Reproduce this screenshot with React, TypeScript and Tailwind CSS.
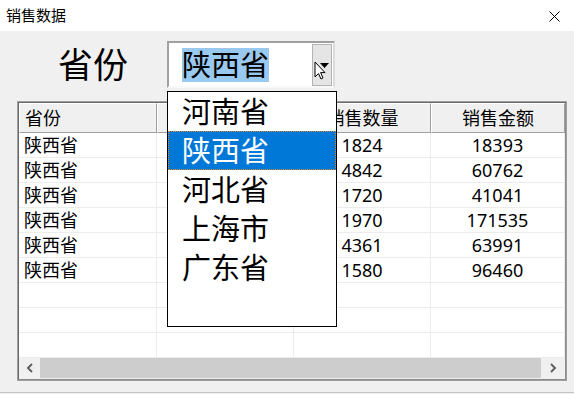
const rows = [
  { province: "陕西省", qty: "1824", amount: "18393" },
  { province: "陕西省", qty: "4842", amount: "60762" },
  { province: "陕西省", qty: "1720", amount: "41041" },
  { province: "陕西省", qty: "1970", amount: "171535" },
  { province: "陕西省", qty: "4361", amount: "63991" },
  { province: "陕西省", qty: "1580", amount: "96460" },
  null,
  null,
  null,
];

const options = ["河南省", "陕西省", "河北省", "上海市", "广东省"];

export default function App() {
  return (
    <div className="w-[574px] h-[394px] bg-[#f0f0f0] flex flex-col text-black font-['Noto_Sans','Noto_Sans_CJK_SC',sans-serif] overflow-hidden">
      {/* Title bar */}
      <div className="h-[31px] shrink-0 bg-white flex items-center justify-between pl-[6px] pr-[14px]">
        <span className="text-[15px] leading-none">销售数据</span>
        <svg width="11" height="11" viewBox="0 0 11 11" className="mt-[1px]">
          <path d="M0.5 0.5 L10.5 10.5 M10.5 0.5 L0.5 10.5" stroke="#000" strokeWidth="1" />
        </svg>
      </div>

      {/* Body */}
      <div className="flex-1 relative flex flex-col border-b border-[#c4c4c4] mb-px">
        {/* Filter row */}
        <div className="flex items-center h-[47px] mt-[10px] pl-[58px]">
          <span className="w-[109px] text-[35px] leading-none">省份</span>
          <div className="w-[168px] h-[47px] border-2 border-t-[#a0a0a0] border-l-[#a0a0a0] border-r-[#dcdcdc] border-b-[#f8f8f8] bg-white flex items-center pl-[13px] pr-[1px]">
            <span className="bg-[#99c9ef] text-[29px] leading-[34px] h-[34px] flex-1 max-w-[87px]">陕西省</span>
            <div className="ml-auto w-[20px] h-[42px] bg-[#e5e5e5] border border-[#b4b4b4]">
              <svg width="18" height="40" viewBox="0 0 18 40">
                <polygon points="7,18 16,18 11.5,23" fill="#000" />
                <path d="M2 17 L2 32 L5.5 28.5 L8 34 L10 33 L7.6 27.6 L12 27.6 Z" fill="#fff" stroke="#000" strokeWidth="1" strokeLinejoin="round" />
              </svg>
            </div>
          </div>
        </div>

        {/* Data grid */}
        <div className="ml-[17px] mt-[13px] w-[550px] h-[280px] border border-t-[#a0a0a0] border-l-[#a0a0a0] border-r-[#a0a0a0] border-b-[#a0a0a0]">
          <div className="w-full h-full border border-[#696969] border-r-[#8a8a8a] border-b-[#8a8a8a] bg-white flex flex-col">
            {/* Header */}
            <div className="grid grid-cols-[138px_137px_137px_134px] h-[30px] shrink-0 bg-[#f0f0f0]">
              <div className="border-t border-l border-white border-r border-b border-r-[#a0a0a0] border-b-[#a0a0a0] flex items-center pl-[5px] text-[18px] leading-none">省份</div>
              <div className="border-t border-l border-white border-r border-b border-r-[#a0a0a0] border-b-[#a0a0a0]" />
              <div className="border-t border-l border-white border-r border-b border-r-[#a0a0a0] border-b-[#a0a0a0] flex items-center justify-center text-[18px] leading-none">销售数量</div>
              <div className="border-t border-l border-white border-r border-b border-r-[#a0a0a0] border-b-[#a0a0a0] flex items-center justify-center text-[18px] leading-none">销售金额</div>
            </div>

            {/* Rows */}
            <div className="flex-1 overflow-hidden">
              {rows.map((r, i) => (
                <div key={i} className="grid grid-cols-[138px_137px_137px_134px] h-[25px]">
                  <div className="border-r border-b border-[#ececec] flex items-center pl-[5px] text-[18px] leading-none">{r?.province}</div>
                  <div className="border-r border-b border-[#ececec]" />
                  <div className="border-r border-b border-[#ececec] flex items-center justify-center text-[18px] leading-none">{r?.qty}</div>
                  <div className="border-r border-b border-[#ececec] flex items-center justify-center text-[18px] leading-none">{r?.amount}</div>
                </div>
              ))}
            </div>

            {/* Horizontal scrollbar */}
            <div className="h-[21px] shrink-0 flex bg-[#f0f0f0] pb-px">
              <div className="w-[21px] flex items-center justify-center">
                <svg width="8" height="10" viewBox="0 0 8 10">
                  <path d="M6 1 L2 5 L6 9" stroke="#606060" strokeWidth="2" fill="none" />
                </svg>
              </div>
              <div className="w-[501px] bg-[#cdcdcd]" />
              <div className="flex-1 flex items-center justify-center">
                <svg width="8" height="10" viewBox="0 0 8 10">
                  <path d="M2 1 L6 5 L2 9" stroke="#606060" strokeWidth="2" fill="none" />
                </svg>
              </div>
            </div>
          </div>
        </div>

        {/* Open dropdown list */}
        <div className="absolute left-[167px] top-[60px] w-[170px] h-[236px] bg-white border border-black">
          {options.map((o) => (
            <div
              key={o}
              className={
                o === "陕西省"
                  ? "h-[39px] flex items-center pl-[13px] text-[29px] leading-none bg-[#0078d7] text-white border border-dotted border-[#d98a2b]"
                  : "h-[39px] flex items-center pl-[13px] text-[29px] leading-none border border-transparent"
              }
            >
              {o}
            </div>
          ))}
        </div>
      </div>
    </div>
  );
}
